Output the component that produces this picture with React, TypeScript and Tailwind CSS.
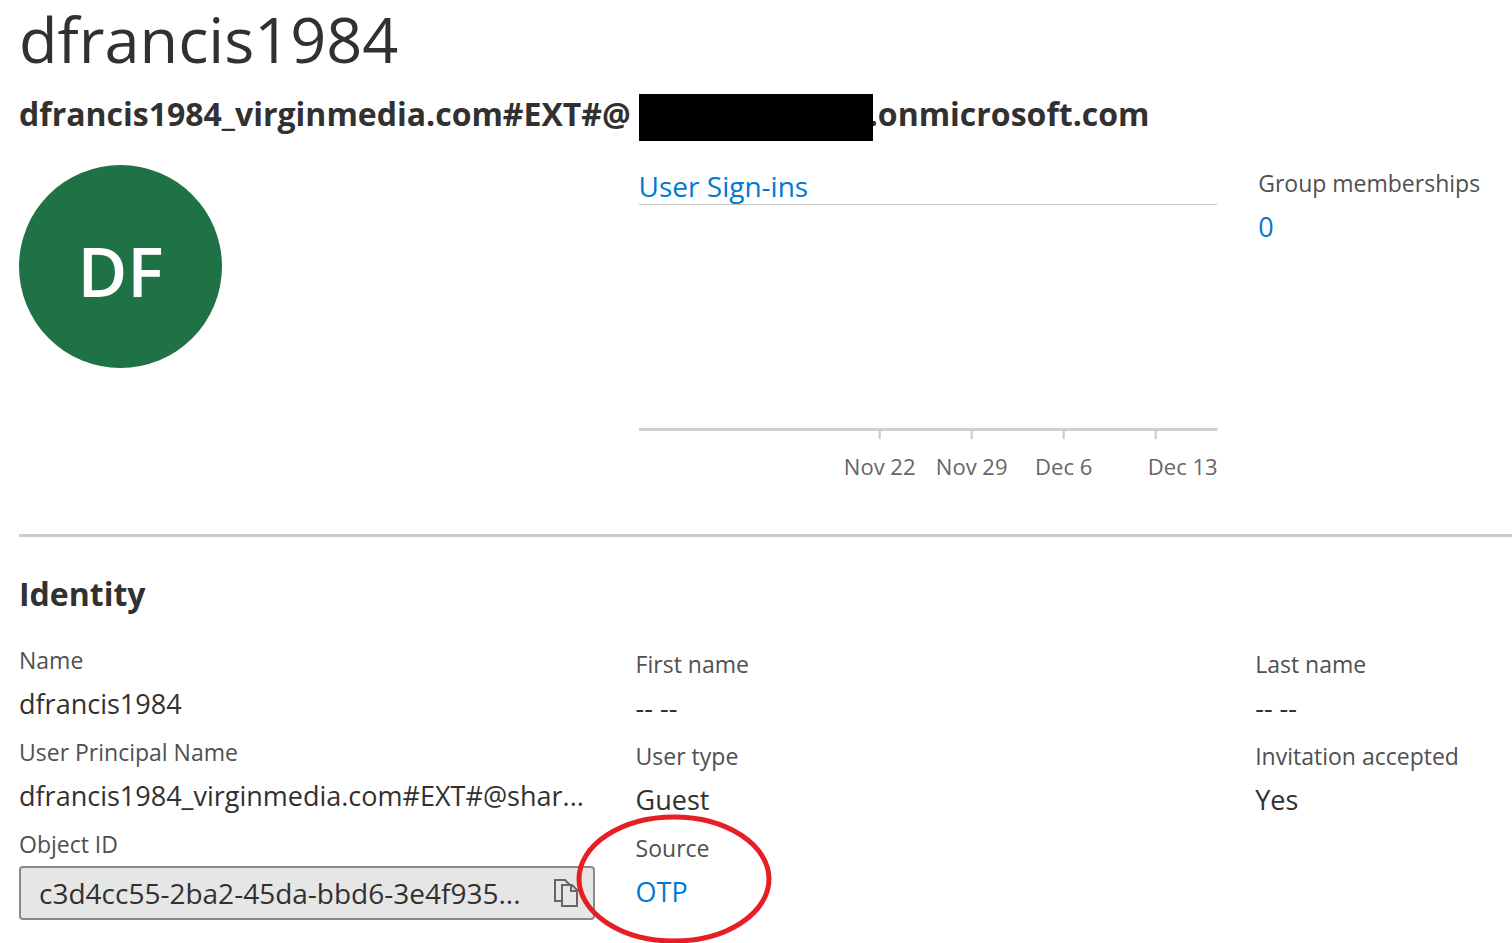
import type { ReactNode } from "react";

const axisTicks = [
  { label: "Nov 22", x: "41.6%" },
  { label: "Nov 29", x: "57.5%" },
  { label: "Dec 6", x: "73.4%" },
  { label: "Dec 13", x: "89.3%", atEnd: true },
];

interface FieldProps {
  label: string;
  children: ReactNode;
}

function Field({ label, children }: FieldProps) {
  return (
    <div>
      <dt className="text-[23px] leading-[36px] text-[#505050]">{label}</dt>
      <dd className="text-[27px] leading-[52px] whitespace-nowrap">{children}</dd>
    </div>
  );
}

function CopyIcon() {
  return (
    <svg width="24" height="28" viewBox="0 0 24 28" fill="none" stroke="#666666" strokeWidth="2">
      <path d="M7 22H1V1h10l5 5" />
      <path d="M8 6h10l5 5v16H8z" />
      <path d="M17 6v6h6" />
    </svg>
  );
}

function SignInsChart() {
  return (
    <section>
      <h3 className="border-b border-[#c8c8c8] text-[28px] leading-[35px]">
        <a href="#sign-ins" className="text-[#0078d4]">User Sign-ins</a>
      </h3>
      <svg className="mt-[223px] block h-[60px] w-full overflow-visible" role="img" aria-label="User sign-ins by week">
        <rect x="0" y="0" width="100%" height="3" fill="#d0d0d0" />
        {axisTicks.map((tick) => (
          <g key={tick.label}>
            <line x1={tick.x} x2={tick.x} y1="2" y2="11" stroke="#c8c8c8" strokeWidth="2" />
            <text
              x={tick.atEnd ? "100%" : tick.x}
              y="47"
              textAnchor={tick.atEnd ? "end" : "middle"}
              className="fill-[#666666] text-[22px]"
            >
              {tick.label}
            </text>
          </g>
        ))}
      </svg>
    </section>
  );
}

export default function App() {
  return (
    <main className="bg-white pb-[23px] pl-[19px] font-['Open_Sans','Noto_Sans',sans-serif] text-[#323130]">
      <h1 className="text-[63px] leading-[78px]">dfrancis1984</h1>
      <h2 className="mt-4 flex items-start text-[32px] leading-[40px] font-bold whitespace-nowrap">
        <span>dfrancis1984_virginmedia.com#EXT#@</span>
        <span className="relative ml-2 h-[47px] w-[234px] bg-black" />
        <span className="-ml-1">.onmicrosoft.com</span>
      </h2>

      <div className="mt-6 grid grid-cols-[41.5%_41.5%_1fr]">
        <div className="flex size-[203px] items-center justify-center rounded-full bg-[#1f7246] pt-2 text-[68px] font-semibold text-white">
          DF
        </div>
        <div className="mr-[41px] pt-1">
          <SignInsChart />
        </div>
        <dl>
          <Field label="Group memberships">
            <a href="#groups" className="text-[#0078d4]">0</a>
          </Field>
        </dl>
      </div>

      <hr className="mt-[46px] border-t-[3px] border-[#cccccc]" />

      <h2 className="mt-[35px] text-[32px] leading-[44px] font-bold">Identity</h2>
      <div className="mt-[26px] grid grid-cols-[41.3%_41.5%_1fr]">
        <div className="mr-[41px]">
          <dl className="flex flex-col gap-1">
            <Field label="Name">dfrancis1984</Field>
            <Field label="User Principal Name">dfrancis1984_virginmedia.com#EXT#@shar...</Field>
          </dl>
          <label htmlFor="object-id" className="mt-1 block text-[23px] leading-[36px] text-[#505050]">
            Object ID
          </label>
          <div className="mt-1 flex h-[54px] items-center rounded border-2 border-[#8a8a8a] bg-[#e6e6e6] pr-[15px] pl-[18px]">
            <input
              id="object-id"
              readOnly
              value="c3d4cc55-2ba2-45da-bbd6-3e4f935..."
              className="min-w-0 flex-1 bg-transparent text-[28px] outline-none"
            />
            <button type="button" aria-label="Copy object ID">
              <CopyIcon />
            </button>
          </div>
        </div>

        <dl className="flex flex-col gap-1 pt-1">
          <Field label="First name">-- --</Field>
          <Field label="User type">Guest</Field>
          <div className="relative">
            <Field label="Source">
              <a href="#source" className="text-[#0078d4]">OTP</a>
            </Field>
            {/* hand-drawn style highlight around the source */}
            <svg
              className="pointer-events-none absolute -top-4 -left-[60px]"
              width="196"
              height="129"
              viewBox="0 0 196 129"
              fill="none"
            >
              <ellipse cx="98" cy="65" rx="95" ry="62" stroke="#e61e25" strokeWidth="5" />
            </svg>
          </div>
        </dl>

        <dl className="flex flex-col gap-1 pt-1">
          <Field label="Last name">-- --</Field>
          <Field label="Invitation accepted">Yes</Field>
        </dl>
      </div>
    </main>
  );
}
